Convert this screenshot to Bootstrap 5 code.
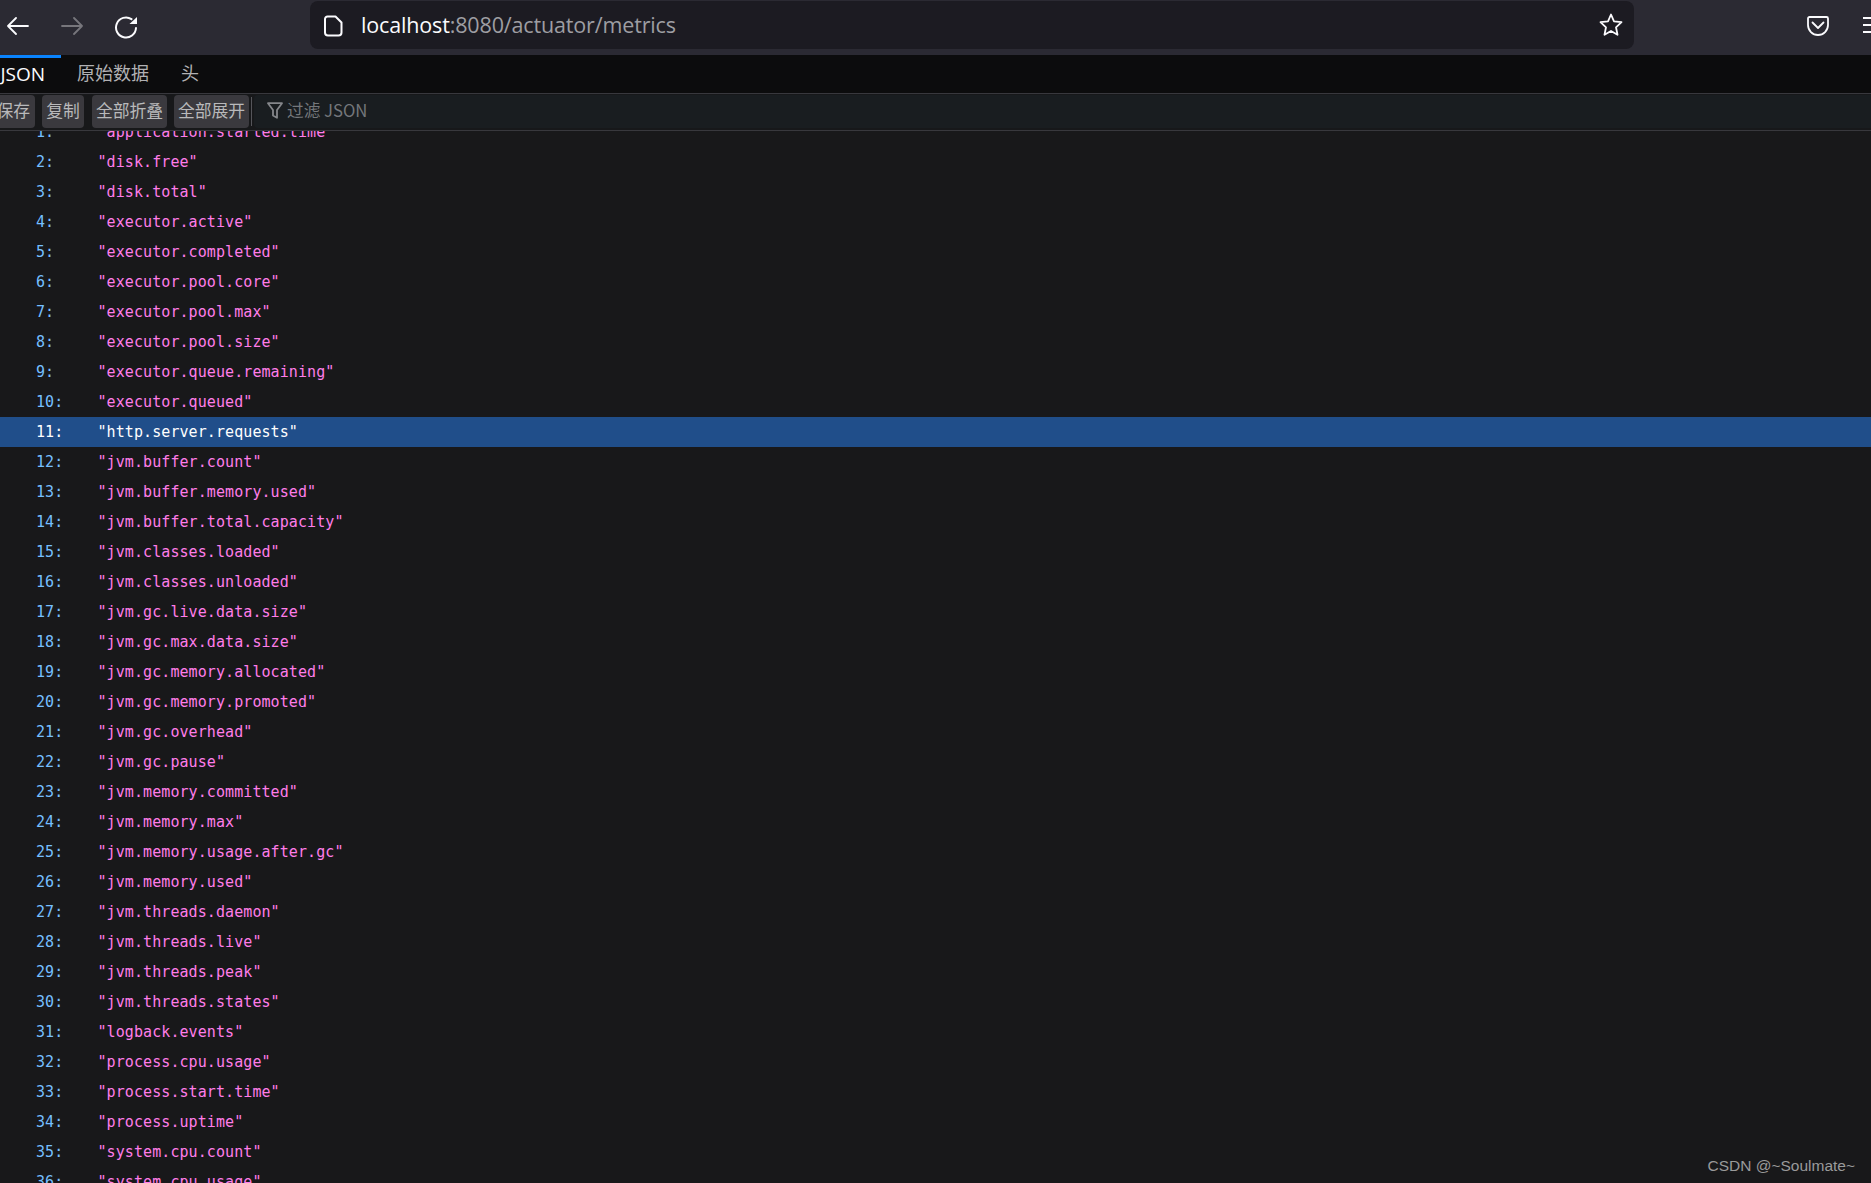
<!DOCTYPE html>
<html lang="zh">
<head>
<meta charset="utf-8">
<title>localhost:8080/actuator/metrics</title>
<link href="https://cdn.jsdelivr.net/npm/bootstrap@5.3.0/dist/css/bootstrap.min.css" rel="stylesheet">
<style>
html,body{height:100%;overflow:hidden;background:#18181a}
body{font-family:"Noto Sans CJK SC","Open Sans",sans-serif;display:flex;flex-direction:column;height:1183px;position:relative}
.chrome-bar{height:55px;background:#2b2a33;flex:none;display:flex;align-items:flex-start;overflow:hidden}
.chrome-bar svg{flex:none}
.ico-back{margin:17px 0 0 7px}
.ico-fwd{margin:17px 0 0 32px}
.ico-reload{margin:16px 0 0 31px}
.url-box{margin:1px 0 0 172px;width:1324px;height:48px;flex:none;background:#1c1b22;border-radius:8px;display:flex;align-items:center;font-family:"Open Sans",sans-serif;font-size:21.5px;color:#9e9ea3;letter-spacing:-.15px;padding:0 11px 0 14px}
.url-box b{font-weight:400;color:#fbfbfe}
.ico-file{margin-right:18px;margin-top:2px}
.ico-star{margin-left:auto;margin-top:-1px}
.ico-pocket{margin:14px 0 0 172px}
.ico-menu{margin:15px 0 0 33px}
.tab-strip{height:38px;background:#0c0c0d;flex:none;display:flex;align-items:stretch;font-size:18px;border-bottom:1px solid #38383d;box-sizing:content-box}
.tab-item{color:#b1b1b3;display:flex;align-items:center;line-height:1;padding-bottom:5px}
.tab-json{width:61px;color:#fbfbfe;border-top:3px solid #0a84ff;justify-content:flex-end;padding:0 16px 3px 0;overflow:hidden;white-space:nowrap;font-family:"Open Sans",sans-serif;font-size:19px}
.tab-raw{margin-left:16px}
.tab-head{margin-left:32px}
.tool-strip{height:37px;background:#17181a;flex:none;display:flex;align-items:flex-start;padding-top:1px;border-bottom:1px solid #38383d;font-size:16.8px;color:#b9b9bb;overflow:hidden}
.tool-btn{height:33px;background:#3a393e;border-radius:4px;display:flex;align-items:center;justify-content:center;line-height:1;flex:none;white-space:nowrap;padding-bottom:2px}
.btn-save{width:35px;justify-content:flex-end;padding-right:5px;overflow:hidden;border-radius:0 4px 4px 0}
.btn-copy{width:42px;margin-left:7px}
.btn-fold{width:75px;margin-left:8px}
.btn-open{width:75px;margin-left:7px}
.tool-sep{width:1px;height:29px;background:#55555a;margin:2px 2px 0 2px;flex:none}
.filter-box{flex:1;display:flex;align-items:center;color:#74777b;font-size:16.7px;height:33px;background:#191d20;border-radius:4px 0 0 4px;padding:0 0 2px 13px}
.filter-box span{margin-left:4px}
.json-view{flex:1;min-height:0;overflow:hidden;background:#18181a;font-family:"DejaVu Sans Mono",monospace;font-size:15px;letter-spacing:.08px}
.json-rows{margin-top:-14px;list-style:none;padding:0}
.json-rows li{height:30px;line-height:30px;display:flex;white-space:pre}
.num{width:97.5px;padding-left:36px;color:#75bfff;flex:none}
.str{color:#ff7de9}
.json-rows li.sel{background:#204e8a}
.sel .num,.sel .str{color:#fff}
.wmark{position:absolute;right:16px;bottom:6px;font-family:"Liberation Sans",sans-serif;font-size:15.5px;color:#9a9a9a}
</style>
</head>
<body>
<div class="chrome-bar">
  <svg class="ico-back" width="22" height="18" viewBox="0 0 22 18" fill="none" stroke="#fbfbfe" stroke-width="1.8" stroke-linecap="round" stroke-linejoin="round"><path d="M1 9H21M9 1L1 9L9 17"/></svg>
  <svg class="ico-fwd" width="22" height="18" viewBox="0 0 22 18" fill="none" stroke="#77767c" stroke-width="1.8" stroke-linecap="round" stroke-linejoin="round"><path d="M1 9H21M13 1L21 9L13 17"/></svg>
  <svg class="ico-reload" width="24" height="24" viewBox="0 0 24 24" fill="none" stroke="#fbfbfe" stroke-width="2" stroke-linecap="round"><path d="M17.500 3.100A10 10 0 1 0 22 12"/><path d="M23 1V8H15.500Z" fill="#fbfbfe" stroke="none"/></svg>
  <div class="url-box">
    <svg class="ico-file" width="19" height="22" viewBox="0 0 19 22" fill="none" stroke="#fbfbfe" stroke-width="2" stroke-linejoin="round"><path d="M3.500 1.500H11.500L17.500 7.500V17.500A3 3 0 0 1 14.500 20.500H4A3 3 0 0 1 1 17.500V4A2.500 2.500 0 0 1 3.500 1.500Z"/></svg>
    <span><b>localhost</b>:8080/actuator/metrics</span>
    <svg class="ico-star" width="24" height="24" viewBox="0 0 24 24" fill="none" stroke="#fbfbfe" stroke-width="1.8" stroke-linejoin="round"><path d="M12 1.500L15 8.300L22.500 9.200L17 14.300L18.500 21.800L12 18L5.500 21.800L7 14.300L1.500 9.200L9 8.300Z"/></svg>
  </div>
  <svg class="ico-pocket" width="24" height="24" viewBox="0 0 24 24" fill="none" stroke="#fbfbfe" stroke-width="1.8" stroke-linecap="round" stroke-linejoin="round"><path d="M3.500 3H20.500A1.500 1.500 0 0 1 22 4.500V11A10 10 0 0 1 2 11V4.500A1.500 1.500 0 0 1 3.500 3Z"/><path d="M6.500 8.500L12 14L17.500 8.500"/></svg>
  <svg class="ico-menu" width="9" height="20" viewBox="0 0 9 20" stroke="#fbfbfe" stroke-width="2"><path d="M0 3H9M0 10H9M0 17H9"/></svg>
</div>
<div class="tab-strip">
  <div class="tab-item tab-json">JSON</div>
  <div class="tab-item tab-raw">原始数据</div>
  <div class="tab-item tab-head">头</div>
</div>
<div class="tool-strip">
  <div class="tool-btn btn-save">保存</div>
  <div class="tool-btn btn-copy">复制</div>
  <div class="tool-btn btn-fold">全部折叠</div>
  <div class="tool-btn btn-open">全部展开</div>
  <div class="tool-sep"></div>
  <div class="filter-box">
    <svg width="16" height="17" viewBox="0 0 16 17" fill="none" stroke="#85878b" stroke-width="1.8" stroke-linejoin="round"><path d="M1 1.200H15L10 8V15.800L6 13.500V8Z"/></svg>
    <span>过滤 JSON</span>
  </div>
</div>
<div class="json-view">
  <ol class="json-rows" id="rows"></ol>
</div>
<div class="wmark">CSDN @~Soulmate~</div>
<script>
var names=["application.started.time","disk.free","disk.total","executor.active","executor.completed","executor.pool.core","executor.pool.max","executor.pool.size","executor.queue.remaining","executor.queued","http.server.requests","jvm.buffer.count","jvm.buffer.memory.used","jvm.buffer.total.capacity","jvm.classes.loaded","jvm.classes.unloaded","jvm.gc.live.data.size","jvm.gc.max.data.size","jvm.gc.memory.allocated","jvm.gc.memory.promoted","jvm.gc.overhead","jvm.gc.pause","jvm.memory.committed","jvm.memory.max","jvm.memory.usage.after.gc","jvm.memory.used","jvm.threads.daemon","jvm.threads.live","jvm.threads.peak","jvm.threads.states","logback.events","process.cpu.usage","process.start.time","process.uptime","system.cpu.count","system.cpu.usage"];
document.getElementById('rows').innerHTML=names.map(function(n,i){return '<li'+(i==10?' class="sel"':'')+'><span class="num">'+(i+1)+':</span><span class="str">"'+n+'"</span></li>';}).join('');
</script>
<script src="https://cdn.jsdelivr.net/npm/bootstrap@5.3.0/dist/js/bootstrap.bundle.min.js"></script>
</body>
</html>
